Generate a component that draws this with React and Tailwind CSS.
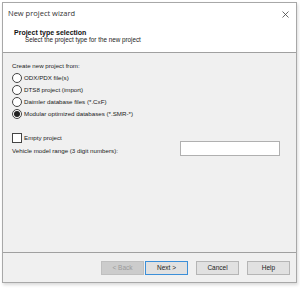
import React from 'react';

const options = [
  { label: 'ODX/PDX file(s)', checked: false },
  { label: 'DTS8 project (import)', checked: false },
  { label: 'Daimler database files (*.CxF)', checked: false },
  { label: 'Modular optimized databases (*.SMR-*)', checked: true },
];

const Radio = ({ checked }) => (
  <span className="w-[10px] h-[10px] rounded-full border border-[#444] bg-white flex items-center justify-center shrink-0">
    {checked && <span className="w-[6px] h-[6px] rounded-full bg-[#222]" />}
  </span>
);

const Button = ({ children, disabled, primary }) => (
  <div
    className={
      'h-[14px] w-[43px] flex items-center justify-center text-[6.5px] border ' +
      (disabled
        ? 'bg-[#cccccc] border-[#bfbfbf] text-[#9a9a9a]'
        : primary
        ? 'bg-[#e1e1e1] border-[#3c8fd8] text-[#222]'
        : 'bg-[#e1e1e1] border-[#b5b5b5] text-[#222]')
    }
  >
    {children}
  </div>
);

export default function App() {
  return (
    <div className="w-[300px] h-[289px] bg-white pt-[2px] pl-[2px]" style={{ fontFamily: '"Liberation Sans", Arial, sans-serif' }}>
      <div className="w-[295px] h-[281px] border border-[#a8a8a8] flex flex-col shadow-[1px_2px_3px_rgba(0,0,0,0.15)]">
        <div className="h-[21px] bg-white flex items-center justify-between pl-[5px] pr-[7px] pt-[1px]">
          <span className="text-[7.5px] text-[#333]" style={{ fontFamily: '"Open Sans", sans-serif' }}>New project wizard</span>
          <svg width="7" height="7" viewBox="0 0 7 7"><path d="M0.5 0.5 L6.5 6.5 M6.5 0.5 L0.5 6.5" stroke="#444" strokeWidth="0.8" /></svg>
        </div>
        <div className="h-[29px] bg-white border-b border-[#a0a0a0] pl-[11px] pt-[5px] leading-[7px]">
          <div className="text-[7px] font-bold text-[#111]">Project type selection</div>
          <div className="text-[6.3px] text-[#222] pl-[11px]">Select the project type for the new project</div>
        </div>
        <div className="flex-1 bg-[#f0f0f0] flex flex-col">
          <div className="flex-1 pl-[9px] pt-[9px] text-[6.2px] text-[#222]">
            <div className="leading-[8px]">Create new project from:</div>
            <div className="flex flex-col gap-[4px] mt-[4px]">
              {options.map((o) => (
                <div key={o.label} className="flex items-center gap-[2px] h-[8px] leading-[8px]">
                  <Radio checked={o.checked} />
                  <span>{o.label}</span>
                </div>
              ))}
            </div>
            <div className="flex items-center gap-[2px] mt-[15px] h-[10px]">
              <span className="w-[10px] h-[10px] border border-[#444] bg-white shrink-0" />
              <span>Empty project</span>
            </div>
            <div className="flex items-center justify-between pr-[16px] mt-[-2px]">
              <span className="mt-[4px]">Vehicle model range (3 digit numbers):</span>
              <div className="w-[100px] h-[15px] bg-white border border-[#b0b0b0]" />
            </div>
          </div>
          <div className="h-[30px] border-t border-[#a0a0a0] flex justify-end items-start pt-[8px] pr-[6px] gap-[8px]">
            <div className="flex gap-[1px]">
              <Button disabled>&lt; Back</Button>
              <Button primary>Next &gt;</Button>
            </div>
            <Button>Cancel</Button>
            <Button>Help</Button>
          </div>
        </div>
      </div>
    </div>
  );
}
